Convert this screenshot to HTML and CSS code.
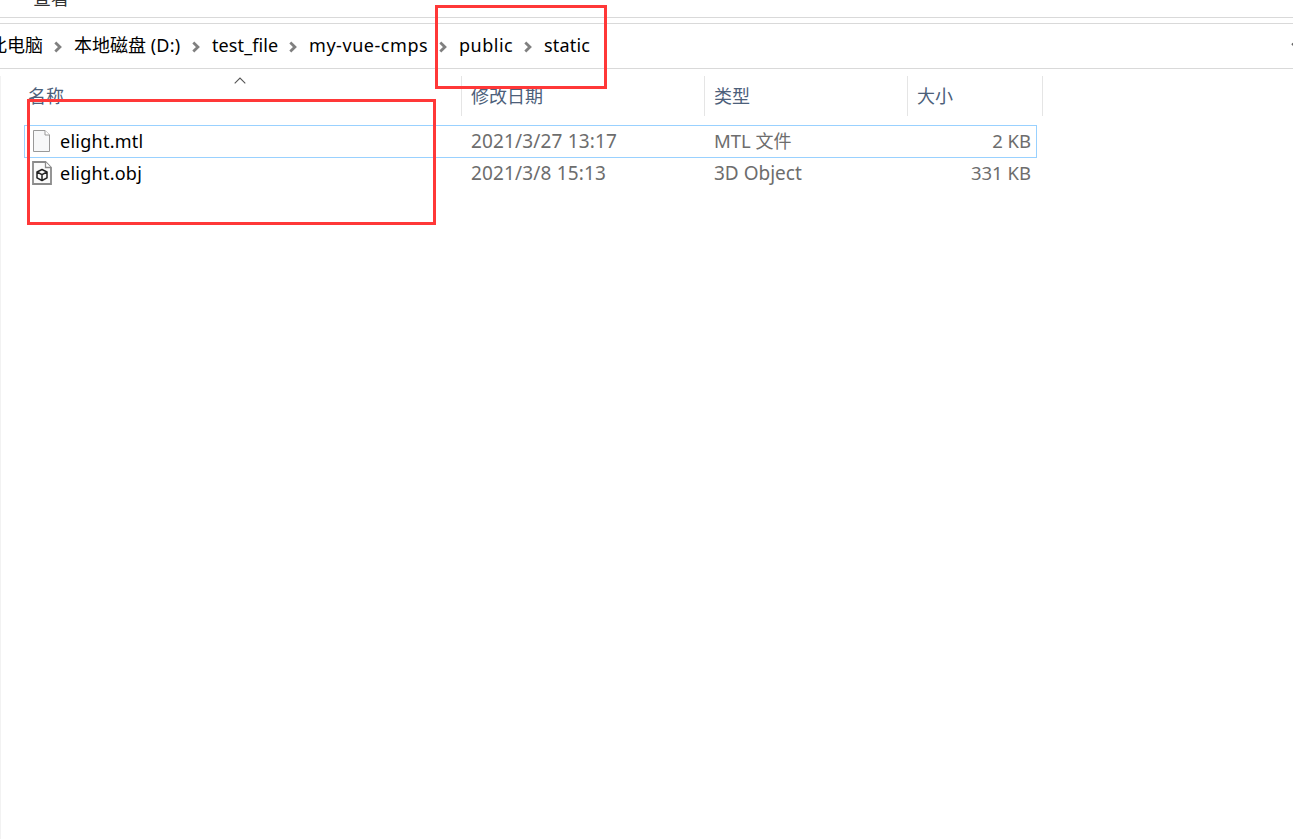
FILE: index.html
```html
<!DOCTYPE html>
<html lang="zh-CN">
<head>
  <meta charset="UTF-8" />
  <meta name="viewport" content="width=device-width, initial-scale=1.0" />
  <title>static</title>
  <link rel="stylesheet" href="styles.css">
</head>
<body>
  <div class="window">
    <div class="tabs"><span>查看</span></div>

    <div class="address">
      <div class="crumbs">
        <span class="crumb pc"><span>此电脑</span></span>
        <svg class="chevron" viewBox="0 0 8 12"><path d="M1.3 1.6 L5.9 6 L1.3 10.4" /></svg>
        <span class="crumb disk">本地磁盘 <span class="drive">(D:)</span></span>
        <svg class="chevron" viewBox="0 0 8 12"><path d="M1.3 1.6 L5.9 6 L1.3 10.4" /></svg>
        <span class="crumb test">test_file</span>
        <svg class="chevron" viewBox="0 0 8 12"><path d="M1.3 1.6 L5.9 6 L1.3 10.4" /></svg>
        <span class="crumb project">my-vue-cmps</span>
        <svg class="chevron" viewBox="0 0 8 12"><path d="M1.3 1.6 L5.9 6 L1.3 10.4" /></svg>
        <span class="crumb public">public</span>
        <svg class="chevron" viewBox="0 0 8 12"><path d="M1.3 1.6 L5.9 6 L1.3 10.4" /></svg>
        <span class="crumb static">static</span>
      </div>
      <svg class="dropdown" viewBox="0 0 12 8"><path d="M1 1.5 L6 6.5 L11 1.5" /></svg>
    </div>

    <div class="files">
      <div class="row head">
        <div class="cell name">名称
          <svg class="sort" viewBox="0 0 12 7"><path d="M0.7 6.3 L6 1 L11.3 6.3" /></svg>
        </div>
        <div class="cell">修改日期</div>
        <div class="cell">类型</div>
        <div class="cell">大小</div>
      </div>
      <div class="row file focused">
        <div class="cell name">
          <svg class="icon" viewBox="0 0 20 24">
            <path d="M1.5 1.5 H13 L17.5 6 V22.5 H1.5 Z" fill="#f7f8f9" stroke="#999" />
            <path d="M13 1.5 V6 H17.5" fill="#fff" stroke="#999" />
          </svg>
          <span>elight.mtl</span>
        </div>
        <div class="cell date">2021/3/27 13:17</div>
        <div class="cell type">MTL <span class="zh">文件</span></div>
        <div class="cell size">2 KB</div>
      </div>
      <div class="row file">
        <div class="cell name">
          <svg class="icon" viewBox="0 0 20 24">
            <path d="M1 1 H13.5 L19 6.5 V23 H1 Z" fill="#fafafa" stroke="#8a8a8a" stroke-width="1.8" />
            <path d="M13.5 1 V6.5 H19" fill="#fff" stroke="#8a8a8a" stroke-width="1.3" />
            <path d="M10 8.5 L15 11 V16.8 L10 19.5 L5 16.8 V11 Z M5 11 L10 13.7 L15 11 M10 13.7 V19.5" fill="none" stroke="#222" stroke-width="1.5" stroke-linejoin="round" />
          </svg>
          <span>elight.obj</span>
        </div>
        <div class="cell date">2021/3/8 15:13</div>
        <div class="cell type object">3D Object</div>
        <div class="cell size">331 KB</div>
      </div>
    </div>

    <div class="mark mark-path"></div>
    <div class="mark mark-files"></div>
  </div>
</body>
</html>
```

FILE: styles.css
```css
* {
  box-sizing: border-box;
}
body {
  margin: 0;
  background: #fff;
  color: #000;
  font-family: "Noto Sans", "Noto Sans CJK SC", sans-serif;
  font-size: 18px;
}
.window {
  position: relative;
  height: 839px;
  overflow: hidden;
  display: flex;
  flex-direction: column;
}
.tabs {
  height: 18px;
  padding-left: 33px;
  border-bottom: 1px solid #d9d9d9;
  display: flex;
  align-items: flex-end;
  overflow: hidden;
  line-height: 26px;
  padding-bottom: 6px;
  color: #333;
}
.address {
  height: 46px;
  margin-top: 5px;
  border-top: 1px solid #d9d9d9;
  border-bottom: 1px solid #d9d9d9;
  display: flex;
  align-items: center;
  justify-content: space-between;
  overflow: hidden;
}
.crumbs {
  display: flex;
  align-items: center;
  height: 44px;
  line-height: 42px;
}
.crumb {
  height: 44px;
  white-space: nowrap;
}
.pc {
  width: 43px;
  display: flex;
  justify-content: flex-end;
  overflow: hidden;
}
.disk {
  width: 107px;
}
.drive {
  letter-spacing: 0.2px;
}
.test {
  width: 66px;
  letter-spacing: 0.1px;
}
.project {
  width: 119px;
  letter-spacing: 0.55px;
}
.public {
  width: 54px;
  letter-spacing: 0.5px;
}
.static {
  letter-spacing: 0.2px;
}
.chevron {
  width: 8px;
  height: 12px;
  margin: 1px 12px 0 11px;
  fill: none;
  stroke: #808080;
  stroke-width: 2.8;
}
.crumb + .chevron + .crumb {
  margin-left: 0;
}
.dropdown {
  width: 12px;
  height: 8px;
  flex-shrink: 0;
  margin-right: -10px;
  fill: none;
  stroke: #666;
  stroke-width: 2;
}
.files {
  flex: 1;
  margin-top: 7px;
  border-left: 1px solid #f2f2f2;
  padding-left: 23px;
}
.row {
  display: grid;
  grid-template-columns: 438px 243px 203px 135px;
}
.head {
  height: 40px;
  margin-bottom: 9px;
  color: #4c607a;
  line-height: 41px;
}
.head .cell {
  height: 40px;
  border-right: 1px solid #e5e5e5;
  padding-left: 9px;
}
.head .name {
  position: relative;
  padding-left: 4px;
}
.sort {
  position: absolute;
  left: 210px;
  top: 1px;
  width: 12px;
  height: 7px;
  fill: none;
  stroke: #555;
  stroke-width: 1.1;
}
.file {
  width: 1013px;
  height: 32px;
  line-height: 30px;
  grid-template-columns: 438px 243px 203px 1fr;
  border: 1px solid transparent;
  border-top: none;
  color: #6d6d6d;
}
.focused {
  height: 33px;
  border: 1px solid #99d1ff;
  line-height: 31px;
}
.file .cell {
  height: 31px;
  padding-left: 8px;
}
.file .name {
  height: 30px;
  display: flex;
  align-items: center;
  padding-left: 7px;
  color: #000;
  letter-spacing: 0.25px;
}
.focused .name {
  height: 31px;
}
.icon {
  width: 20px;
  height: 24px;
  margin-right: 8px;
}
.focused .icon {
  margin-top: -1px;
}
.file .date {
  font-size: 19px;
  letter-spacing: 0.15px;
}
.file .type,
.file .size {
  font-size: 18.5px;
}
.focused .type,
.focused .size {
  line-height: 30px;
}
.file .object {
  font-size: 19px;
}
.zh {
  font-size: 18px;
}
.file .size {
  text-align: right;
  padding-right: 5px;
}
.mark {
  position: absolute;
  border: 3px solid #ff3838;
}
.mark-path {
  left: 435px;
  top: 5px;
  width: 172px;
  height: 84px;
}
.mark-files {
  left: 27px;
  top: 99px;
  width: 409px;
  height: 126px;
}
```
